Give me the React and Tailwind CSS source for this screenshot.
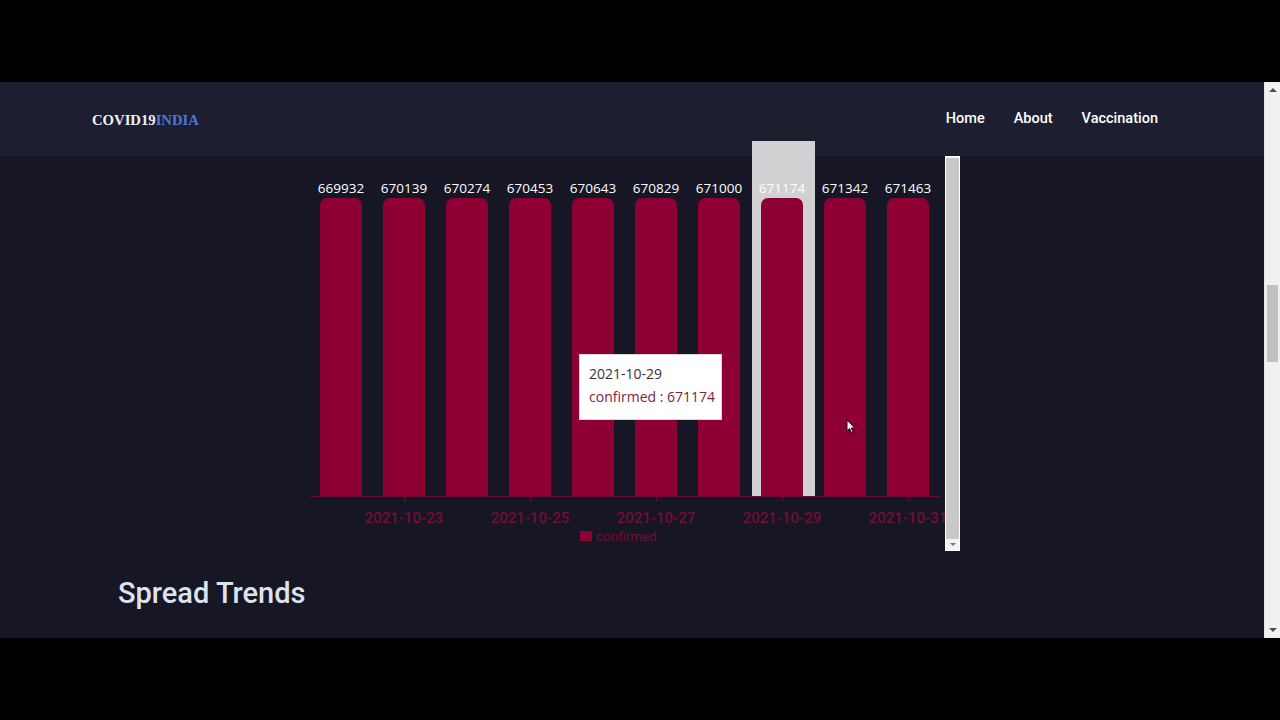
import React from 'react';

const data = [
  { date: '2021-10-22', value: 669932 },
  { date: '2021-10-23', value: 670139 },
  { date: '2021-10-24', value: 670274 },
  { date: '2021-10-25', value: 670453 },
  { date: '2021-10-26', value: 670643 },
  { date: '2021-10-27', value: 670829 },
  { date: '2021-10-28', value: 671000 },
  { date: '2021-10-29', value: 671174 },
  { date: '2021-10-30', value: 671342 },
  { date: '2021-10-31', value: 671463 },
];

const sans = { fontFamily: '"Open Sans", "Noto Sans", sans-serif' };

function Header() {
  return (
    <header className="h-[74px] bg-[#1d1e2f] flex items-center justify-between pl-[92px] pr-[106px] shrink-0">
      <div className="font-bold text-[14.7px] leading-[18px] mt-[2px]" style={{ fontFamily: '"Liberation Serif", serif' }}>
        <span className="text-[#eef0f5]">COVID19</span>
        <span className="text-[#4a78d8]">INDIA</span>
      </div>
      <nav className="flex items-center gap-[29px] text-[14.5px] font-medium text-white" style={{ fontFamily: 'Roboto, sans-serif' }}>
        <span>Home</span>
        <span>About</span>
        <span>Vaccination</span>
      </nav>
    </header>
  );
}

function Chart() {
  return (
    <div className="ml-[310px] w-[650px] h-[395px] flex relative">
      <div className="w-[635px] relative">
        {/* hover highlight */}
        <div className="absolute left-[442px] top-[-15px] w-[63px] h-[355px] bg-[#d1d1d3]" />

        {/* bars */}
        <div className="relative flex gap-[21px] pl-[10px] pt-[24px]" style={sans}>
          {data.map((d) => (
            <div key={d.date} className="w-[42px] flex flex-col items-center">
              <div className="h-[16px] leading-[16px] text-[13.5px] text-white whitespace-nowrap flex justify-center">
                {d.value}
              </div>
              <div className="mt-[2px] w-[42px] h-[298px] bg-[#8e0034] rounded-t-[7px]" />
            </div>
          ))}
        </div>

        {/* axis */}
        <div className="relative w-[630px] h-px bg-[#6d0a2b]" />
        <div className="flex gap-[21px] pl-[10px]" style={{ fontFamily: 'Roboto, sans-serif' }}>
          {data.map((d, i) => (
            <div key={d.date} className="w-[42px] flex flex-col items-center">
              <div className={i % 2 === 1 ? 'w-px h-[5px] bg-[#6d0a2b]' : 'w-px h-[5px]'} />
              <div className="mt-[5px] h-[22px] leading-[22px] text-[15px] font-medium text-[#740e32] whitespace-nowrap flex justify-center">
                {i % 2 === 1 ? d.date : ''}
              </div>
            </div>
          ))}
        </div>

        {/* legend */}
        <div className="flex items-center ml-[270px] gap-[4px]" style={{ fontFamily: 'Roboto, sans-serif' }}>
          <div className="w-[12px] h-[10px] bg-[#8e0034]" />
          <span className="text-[13.5px] leading-[14px] text-[#740e32]">confirmed</span>
        </div>

        {/* tooltip */}
        <div className="absolute left-[269px] top-[198px] w-[143px] h-[66px] bg-white border border-[#d8d8d8] px-[9px] pt-[9px] whitespace-nowrap" style={sans}>
          <div className="text-[14px] leading-[20px] text-[#333333]">2021-10-29</div>
          <div className="text-[14px] leading-[20px] mt-[3px] text-[#7c2444]">confirmed : 671174</div>
        </div>

        {/* mouse pointer */}
        <svg className="absolute left-[536px] top-[263px]" width="10" height="15" viewBox="0 0 10 15">
          <path d="M1 1 L1 12 L3.6 9.6 L5.4 13.6 L7 12.9 L5.3 9 L8.8 9 Z" fill="#ffffff" stroke="#111111" strokeWidth="1" />
        </svg>
      </div>

      {/* inner scrollbar */}
      <div className="w-[15px] h-[395px] bg-[#f2f2f2] border border-[#ffffff] flex flex-col items-center">
        <div className="w-[13px] flex-1 bg-[#c9c9c9] mt-[1px]" />
        <div className="h-[11px] flex items-center justify-center">
          <div className="w-0 h-0 border-l-[3px] border-r-[3px] border-t-[3px] border-l-transparent border-r-transparent border-t-[#777777]" />
        </div>
      </div>
    </div>
  );
}

function PageScrollbar() {
  return (
    <div className="w-[16px] h-full bg-[#f1f1f1] flex flex-col items-center border-l border-[#e5e5e5]">
      <div className="h-[16px] flex items-center justify-center">
        <div className="w-0 h-0 border-l-[4px] border-r-[4px] border-b-[4px] border-l-transparent border-r-transparent border-b-[#505050]" />
      </div>
      <div className="h-[187px]" />
      <div className="w-[11px] h-[77px] bg-[#c1c1c1]" />
      <div className="flex-1" />
      <div className="h-[16px] flex items-center justify-center">
        <div className="w-0 h-0 border-l-[4px] border-r-[4px] border-t-[4px] border-l-transparent border-r-transparent border-t-[#505050]" />
      </div>
    </div>
  );
}

export default function App() {
  return (
    <div className="w-[1280px] h-[720px] bg-black flex flex-col overflow-hidden">
      <div className="h-[82px] shrink-0" />
      <div className="h-[556px] flex shrink-0">
        <div className="w-[1264px] h-full bg-[#161624] flex flex-col overflow-hidden">
          <Header />
          <Chart />
          <h2 className="ml-[118px] mt-[26px] text-[29px] leading-[33px] font-medium text-[#dde3ee]" style={{ fontFamily: 'Roboto, sans-serif' }}>
            Spread Trends
          </h2>
        </div>
        <PageScrollbar />
      </div>
      <div className="h-[82px] shrink-0" />
    </div>
  );
}
